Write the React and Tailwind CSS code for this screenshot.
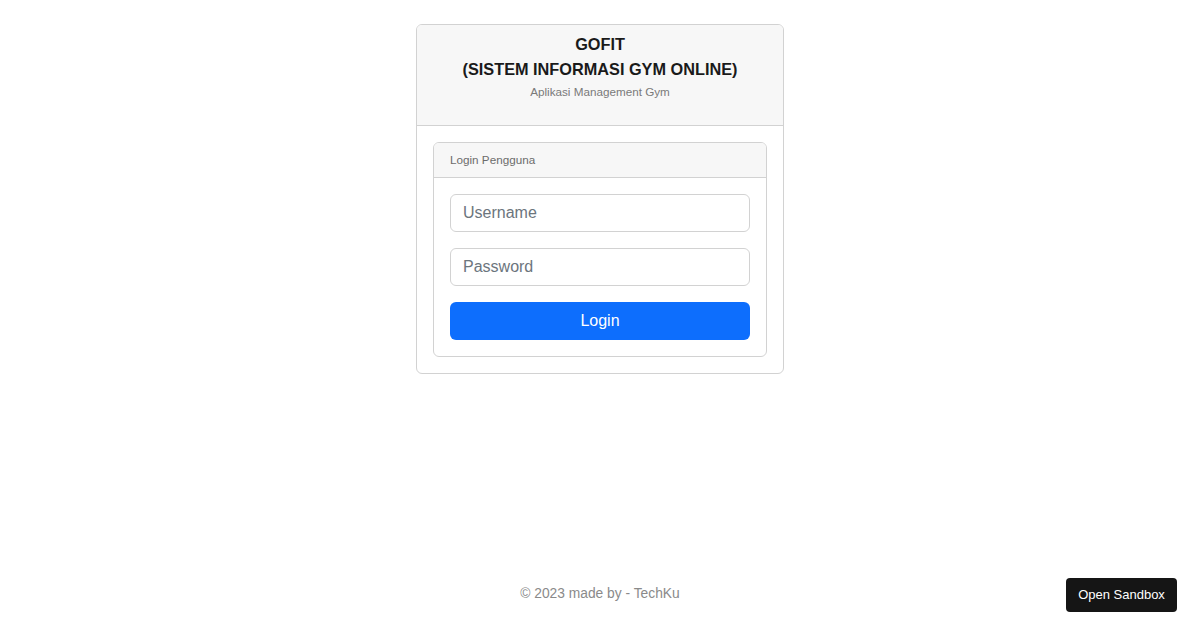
export default function App() {
  return (
    <div className="relative w-[1200px] h-[630px] bg-white" style={{ fontFamily: '"Liberation Sans", Arial, sans-serif' }}>
      <div className="flex justify-center pt-[24px]">
        <div className="w-[368px] border border-[#d2d2d2] rounded-[6px] overflow-hidden">
          <div className="bg-[#f7f7f7] border-b border-[#d2d2d2] h-[101px] pt-[7px] text-center">
            <div className="text-[16.3px] leading-[25px] font-bold text-[#1a1a1a]">GOFIT</div>
            <div className="text-[16.3px] leading-[25px] font-bold text-[#1a1a1a]">(SISTEM INFORMASI GYM ONLINE)</div>
            <div className="text-[11.7px] leading-[18px] mt-[1px] text-[#7a7a7a]">Aplikasi Management Gym</div>
          </div>
          <div className="p-[16px]">
            <div className="border border-[#d2d2d2] rounded-[6px] overflow-hidden">
              <div className="bg-[#f7f7f7] border-b border-[#d2d2d2] h-[35px] px-[16px] flex items-center text-[11.7px] text-[#6c6c6c]">Login Pengguna</div>
              <div className="p-[16px] flex flex-col gap-[16px]">
                <input placeholder="Username" className="h-[38px] w-full border border-[#d2d2d2] rounded-[6px] px-[12px] text-[16px] placeholder:text-[#6c757d] outline-none" />
                <input placeholder="Password" type="password" className="h-[38px] w-full border border-[#d2d2d2] rounded-[6px] px-[12px] text-[16px] placeholder:text-[#6c757d] outline-none" />
                <button className="h-[38px] w-full bg-[#0d6efd] text-white rounded-[6px] text-[16px]">Login</button>
              </div>
            </div>
          </div>
        </div>
      </div>
      <div className="absolute left-0 right-0 top-[584px] text-center text-[13.8px] leading-[20px] text-[#8a8a8a]">© 2023 made by - TechKu</div>
      <div className="absolute left-[1066px] top-[578px] w-[111px] h-[34px] bg-[#151515] rounded-[4px] flex items-center justify-center text-[13px] text-white">Open Sandbox</div>
    </div>
  );
}
